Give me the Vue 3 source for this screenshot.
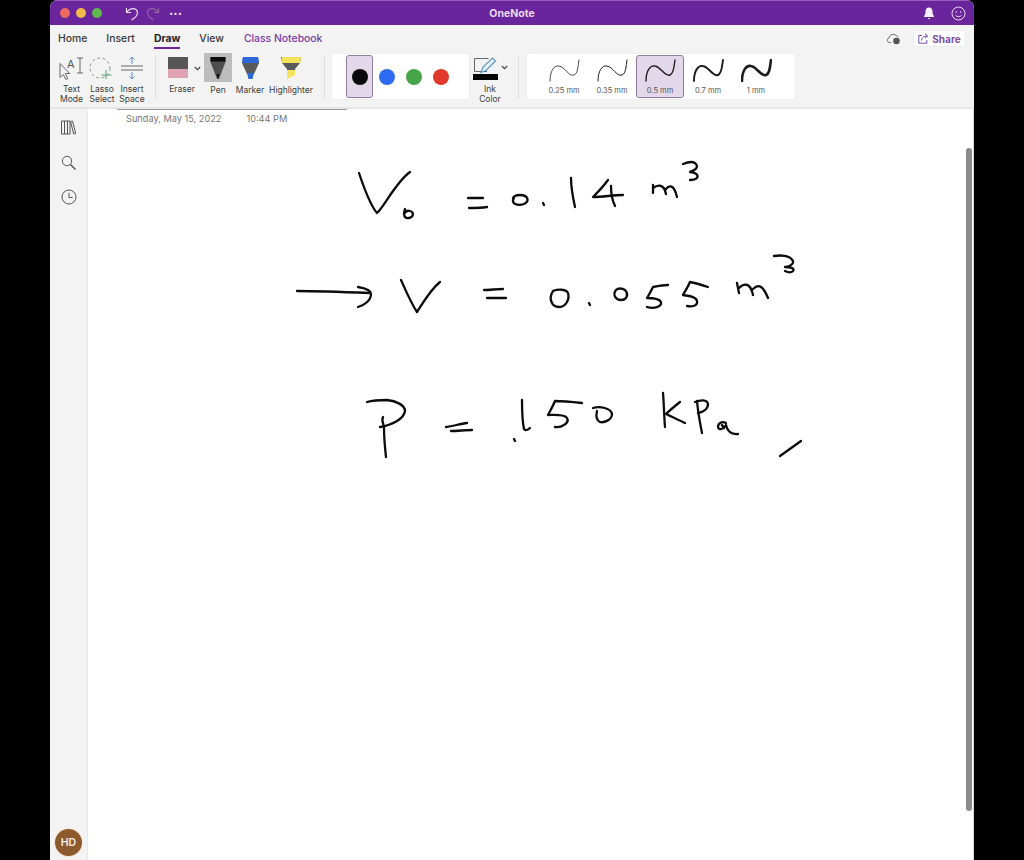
<template>
  <div class="window">
    <header class="titlebar">
      <div class="title-left">
        <span class="light red"></span>
        <span class="light yellow"></span>
        <span class="light green"></span>
        <svg class="undo" width="14" height="15" viewBox="0 0 14 15">
          <path d="M1.5 2v4.5H6M1.5 6.5C4 3 8 1.5 11 3.5c2.5 2 1.5 6-1 8l-3.5 2.500" />
        </svg>
        <svg class="redo" width="14" height="15" viewBox="0 0 14 15">
          <path d="M12.5 2v4.5H8M12.5 6.5C10 3 6 1.5 3 3.5c-2.5 2-1.5 6 1 8l3.5 2.500" />
        </svg>
        <span class="more">···</span>
      </div>
      <div class="app-name">OneNote</div>
      <div class="title-right">
        <svg width="12" height="13" viewBox="0 0 12 13">
          <path d="M6 .5C3.5.5 2.5 2.5 2.5 4.500c0 2.500-.5 3.500-1.500 4.500v1h10V9c-1-1-1.500-2-1.500-4.500C9.500 2.500 8.500.5 6 .5zM4.700 11h2.600L6 12.500z" fill="#f6eefa" />
        </svg>
        <svg width="15" height="15" viewBox="0 0 15 15" class="smile">
          <circle cx="7.5" cy="7.5" r="6.5" />
          <circle cx="5.3" cy="6" r=".8" class="eye" />
          <circle cx="9.7" cy="6" r=".8" class="eye" />
          <path d="M4.5 9.3c1.500 1.800 4.500 1.800 6 0" />
        </svg>
      </div>
    </header>

    <section class="ribbon">
      <div class="tabs">
        <nav class="tab-list">
          <span class="tab">Home</span>
          <span class="tab">Insert</span>
          <span class="tab active">Draw</span>
          <span class="tab">View</span>
          <span class="tab notebook">Class Notebook</span>
        </nav>
        <div class="share-area">
          <svg width="15" height="13" viewBox="0 0 15 13" class="cloud">
            <path d="M5 10.5H3.5C1 10.5.5 6.500 3 6c.3-3 4.500-5 7-2.500 1 .2 2 .8 2.200 2" />
            <circle cx="10.5" cy="9" r="3.3" fill="#555" stroke="none" />
          </svg>
          <button class="share">
            <svg width="11" height="11" viewBox="0 0 11 11">
              <path d="M4 2.5H.8v7.700h8V7M3.500 7.500c.3-3 2.500-4.500 5.500-4.500M7 .8 9.800 3 7 5.300" />
            </svg>
            Share
          </button>
        </div>
      </div>

      <div class="tools">
        <div class="tool mode-tool wide-31">
          <svg width="28" height="24" viewBox="0 0 28 24">
            <path d="M2 7.5v14l3.300-3 2.500 5 2-1-2.500-5h4.500z" class="outline" />
            <text x="9" y="12" class="tool-a">A</text>
            <path d="M19 2h6M22 2v15M19 17h6" class="outline" />
          </svg>
          <span>Text<br />Mode</span>
        </div>
        <div class="tool mode-tool">
          <svg width="28" height="24" viewBox="0 0 28 24">
            <circle cx="12" cy="12" r="10" class="lasso" />
            <path d="M18 14v9M13.5 19h10" class="lasso-plus" />
          </svg>
          <span>Lasso<br />Select</span>
        </div>
        <div class="tool mode-tool">
          <svg width="28" height="24" viewBox="0 0 28 24">
            <path d="M3 10h22M3 14h22" class="outline" />
            <path d="M14 8V1M11.500 3.500 14 1l2.500 2.500M14 16v7M11.500 20.500 14 23l2.500-2.500" class="blue-line" />
          </svg>
          <span>Insert<br />Space</span>
        </div>

        <div class="sep first-sep"></div>

        <div class="tool pen-tool eraser">
          <svg width="20" height="21" viewBox="0 0 20 21">
            <rect width="20" height="12" fill="#565656" />
            <rect y="12" width="20" height="9" fill="#dfa3b2" />
          </svg>
          <span class="one-line">Eraser</span>
          <svg class="chev" width="7" height="5" viewBox="0 0 7 5"><path d="M.8 1 3.500 3.700 6.200 1" /></svg>
        </div>
        <div class="tool pen-tool pen">
          <div class="pen-bg">
            <svg width="16" height="22" viewBox="0 0 16 22">
              <path d="M.5 0h15v5L9 22H7L.5 5z" fill="#4e4e4e" />
              <path d="M.5 0h15v4.500H.5zM6.500 17h3L8 22z" fill="#0b0b0b" />
            </svg>
          </div>
          <span class="one-line">Pen</span>
        </div>
        <div class="tool pen-tool marker">
          <div class="pen-box">
            <svg width="17" height="22" viewBox="0 0 17 22">
              <path d="M1 0h15l1 6-5 11H5L0 6z" fill="#5a5a5a" />
              <path d="M1 0h15l1 6H0zM5 16h7l-1.500 6h-4z" fill="#2d68d8" />
            </svg>
          </div>
          <span class="one-line">Marker</span>
        </div>
        <div class="tool pen-tool highlighter">
          <div class="pen-box">
            <svg width="20" height="22" viewBox="0 0 20 22">
              <path d="M0 0h20l-1 6-5 6v3H6v-3L1 6z" fill="#5a5a5a" />
              <path d="M1 0h19l-1 6H0zM6 13h8v5l-8 4z" fill="#f3e35c" />
            </svg>
          </div>
          <span class="one-line">Highlighter</span>
        </div>

        <div class="sep second-sep"></div>

        <div class="panel colors">
          <div v-for="(color, i) in inkColors" :key="color" class="color-cell" :class="{ selected: i === 0 }">
            <span class="dot" :style="{ background: color }"></span>
          </div>
        </div>

        <div class="tool ink-color">
          <svg width="26" height="24" viewBox="0 0 26 24">
            <path d="M14 14.5H1.500V1.500h14" class="outline" />
            <path d="M8 15.5 10 10 19.500 1l3 3-9.500 9.500z" class="pen-line" />
            <rect y="17" width="25" height="6" fill="#050505" />
          </svg>
          <span>Ink<br />Color</span>
          <svg class="chev" width="7" height="5" viewBox="0 0 7 5"><path d="M.8 1 3.500 3.700 6.200 1" /></svg>
        </div>

        <div class="sep third-sep"></div>

        <div class="panel weights">
          <div v-for="(w, i) in weights" :key="w.label" class="weight-cell" :class="{ selected: i === 2 }">
            <svg width="31" height="23" viewBox="0 0 31 23">
              <path d="M1 22C1 12 5 6 10 7c6 1 10 11 15 9 4-1.500 4-9 5-15" :stroke-width="w.size" />
            </svg>
            <span>{{ w.label }}</span>
          </div>
        </div>
      </div>
    </section>

    <main class="body">
      <aside class="sidebar">
        <div class="side-icons">
          <svg width="15" height="15" viewBox="0 0 15 15">
            <path d="M.5 1h3v13h-3zM3.500 1h3v13h-3zM6.500 1h2.500v13H6.500zM9.500 1.500l2-.5 3.200 12.500-2 .5z" />
          </svg>
          <svg width="15" height="15" viewBox="0 0 15 15">
            <circle cx="6" cy="6" r="4.7" />
            <path d="M9.5 9.5l5 5" stroke-width="1.5" />
          </svg>
          <svg width="16" height="16" viewBox="0 0 16 16">
            <circle cx="8" cy="8" r="7" />
            <path d="M8 3.8V8.500h3.700" />
          </svg>
        </div>
        <div class="avatar">HD</div>
      </aside>

      <div class="page">
        <div class="page-date">
          <span>Sunday, May 15, 2022</span>
          <span class="time">10:44 PM</span>
        </div>
        <!-- рукописные штрихи в координатах окна -->
        <svg class="ink" viewBox="88 109 886 751" width="886" height="751">
          <path v-for="(d, i) in strokes" :key="i" :d="d" />
        </svg>
        <div class="scrollbar"></div>
      </div>
    </main>
  </div>
</template>

<script setup>
const inkColors = ['#0a0a0c', '#2f6bf0', '#46a547', '#e0392b']

const weights = [
  { label: '0.25 mm', size: 0.8 },
  { label: '0.35 mm', size: 1 },
  { label: '0.5 mm', size: 1.4 },
  { label: '0.7 mm', size: 1.9 },
  { label: '1 mm', size: 2.6 },
]

const strokes = [
  // V0 = 0.14 m3
  'M359 173C364 188 371 206 377 213C384 207 396 182 410 172',
  'M405 209C403 214 404 219 409 218C414 217 414 212 410 211C407 210 405 212 404 214',
  'M468 198C473 198 478 198 483 198',
  'M469 208C475 208 481 208 487 207',
  'M514 198C510 204 518 206 524 204C530 201 528 195 520 195C516 195 514 196 513 198',
  'M543 203L544 205',
  'M571 178C571 188 573 198 575 207',
  'M608 180C603 187 598 192 593 197C603 197 613 195 623 195',
  'M611 186C611 193 612 200 615 206',
  'M653 185L653 193M653 188C657 185 664 183 666 194M666 189C669 185 674 184 677 197',
  'M683 164C688 162 695 160 697 166C697 170 692 171 690 172C695 172 699 175 697 178C695 180 692 180 690 180',
  // -> V = 0.055 m3
  'M297 291C320 291 345 292 370 293',
  'M358 287C364 288 371 290 371 294C371 300 365 305 358 307',
  'M401 280C406 291 411 303 417 312C423 303 430 290 440 282',
  'M484 290C490 290 497 289 503 289',
  'M487 298C493 298 500 298 506 298',
  'M553 291C548 299 552 307 559 307C566 307 570 299 568 293C566 289 558 289 553 291',
  'M589 303L590 305',
  'M616 290C612 295 616 300 621 300C627 300 629 294 625 290C622 288 618 288 616 290',
  'M668 285C663 285 658 286 653 287C651 291 649 295 647 298C652 298 659 298 661 302C662 307 654 309 647 307',
  'M708 287C702 285 696 283 690 282C688 287 685 291 683 295C688 296 696 296 697 301C698 306 692 307 687 306',
  'M737 283L739 293M739 288C743 284 750 281 753 295M753 289C757 285 762 283 768 298',
  'M774 256C780 255 790 255 793 261C794 265 788 267 785 267C790 267 795 268 793 271C791 273 787 272 785 271',
  // P = 150 kPa
  'M367 402C374 400 381 400 387 400C396 401 405 405 405 411C404 419 392 425 380 427',
  'M383 417C381 421 384 424 384 428C384 438 385 448 386 457',
  'M446 427C453 426 460 424 467 423',
  'M451 431C458 431 465 430 472 430',
  'M514 439L515 441',
  'M522 400C522 410 522 420 524 429C525 431 528 430 530 428',
  'M582 403C573 402 564 401 555 401C553 406 550 411 548 415C554 415 565 414 567 418C570 423 561 428 555 427',
  'M593 408C600 406 611 408 612 414C612 420 604 423 600 422C596 420 596 415 597 411',
  'M663 393C664 404 664 416 665 427',
  'M680 402C675 406 670 410 666 414C672 417 679 420 685 423',
  'M697 401C698 412 700 423 702 433',
  'M695 402C700 400 707 399 708 404C708 409 703 412 698 413',
  'M726 423C722 421 718 423 718 427C719 431 724 429 726 425C727 429 729 435 738 434M722 425L724 428',
  'M780 456C787 451 794 446 801 441',
]
</script>

<style>
html,
body {
  margin: 0;
  background: #000;
}
</style>

<style scoped>
.window {
  width: 924px;
  height: 860px;
  margin-left: 50px;
  display: flex;
  flex-direction: column;
  overflow: hidden;
  background: #fff;
  font-family: Inter, "Liberation Sans", sans-serif;
  color: #333;
  border-radius: 8px 8px 0 0;
}

.titlebar {
  height: 25px;
  flex-shrink: 0;
  box-sizing: border-box;
  border-top: 1px solid #9a5cc0;
  background: #6a259c;
  display: grid;
  grid-template-columns: 1fr auto 1fr;
  align-items: center;
}

.title-left {
  display: flex;
  align-items: center;
  padding-left: 10px;
}

.light {
  width: 10px;
  height: 10px;
  border-radius: 50%;
  margin-right: 6px;
}

.light.red { background: #ec6a5e; }
.light.yellow { background: #f1b84a; }
.light.green { background: #5fb94f; }

.undo,
.redo {
  fill: none;
  stroke-width: 1.2;
}

.undo {
  margin-left: 17px;
  stroke: #e9daf3;
}

.redo {
  margin-left: 7px;
  stroke: #96649f;
}

.more {
  margin-left: 9px;
  color: #e9daf3;
  font-size: 13px;
  font-weight: 700;
  line-height: 1;
}

.app-name {
  color: #e9d8f3;
  font-size: 10.5px;
  font-weight: 700;
}

.title-right {
  display: flex;
  justify-content: flex-end;
  align-items: center;
  gap: 16px;
  padding-right: 8px;
}

.smile {
  fill: none;
  stroke: #e9daf3;
  stroke-width: 1;
}

.smile .eye {
  fill: #e9daf3;
  stroke: none;
}

.ribbon {
  height: 84px;
  flex-shrink: 0;
  box-sizing: border-box;
  background: #f3f3f3;
  border-bottom: 2px solid #e6e6e6;
}

.tabs {
  height: 27px;
  display: flex;
  justify-content: space-between;
  align-items: center;
}

.tab-list {
  display: flex;
  gap: 19px;
  padding-left: 8px;
  font-size: 10.4px;
  font-weight: 500;
}

.tab {
  position: relative;
  color: #3a3a3a;
}

.tab.active {
  font-weight: 700;
  color: #222;
}

.tab.active::after {
  content: "";
  position: absolute;
  left: 0;
  right: 0;
  bottom: -4px;
  height: 2px;
  background: #6a259c;
}

.tab.notebook {
  margin-left: 1px;
  color: #7a3aa8;
}

.share-area {
  display: flex;
  align-items: center;
  gap: 12px;
  padding-right: 8px;
}

.cloud {
  fill: none;
  stroke: #666;
  stroke-width: 1;
}

.share {
  width: 53px;
  height: 17px;
  padding: 0;
  display: flex;
  align-items: center;
  justify-content: center;
  gap: 3px;
  background: #fff;
  border: 1px solid #ececec;
  border-radius: 3px;
  font-family: inherit;
  font-size: 10px;
  font-weight: 700;
  color: #7d4aa5;
}

.share svg {
  fill: none;
  stroke: #7d4aa5;
  stroke-width: 1;
}

.tools {
  height: 48px;
  padding-left: 6px;
  display: flex;
  align-items: flex-start;
  margin-top: 1px;
}

.tool {
  position: relative;
  display: flex;
  flex-direction: column;
  align-items: center;
  flex-shrink: 0;
  font-size: 8.5px;
  line-height: 9.5px;
  text-align: center;
  color: #3c3c3c;
}

.tool > span {
  display: block;
}

.mode-tool {
  width: 30px;
  padding-top: 3px;
}

.mode-tool.wide-31 {
  width: 31px;
}

.mode-tool > svg {
  margin-bottom: 5px;
}

.outline {
  fill: none;
  stroke: #666;
  stroke-width: 1;
}

.tool-a {
  font-size: 11px;
  fill: #555;
}

.lasso {
  fill: none;
  stroke: #8b9a8d;
  stroke-width: 1;
  stroke-dasharray: 3 2.5;
}

.lasso-plus {
  fill: none;
  stroke: #5d9c84;
  stroke-width: 1;
}

.blue-line {
  fill: none;
  stroke: #5b93c4;
  stroke-width: 1;
}

.pen-line {
  fill: #e9f1f8;
  stroke: #5c97c9;
  stroke-width: 1.2;
}

.sep {
  width: 1px;
  height: 44px;
  margin-top: 2px;
  flex-shrink: 0;
  background: #dedede;
}

.first-sep {
  margin-left: 8px;
  margin-right: 11px;
}

.pen-tool .one-line {
  margin-top: 4px;
}

.eraser {
  width: 30px;
  padding-top: 4px;
  margin-right: 7px;
}

.eraser > svg:first-child {
  align-self: flex-start;
  margin-left: 1px;
}

.eraser .one-line {
  margin-top: 7px;
}

.chev {
  position: absolute;
  fill: none;
  stroke: #444;
  stroke-width: 1.2;
}

.eraser .chev {
  top: 13px;
  left: 27px;
}

.pen {
  width: 28px;
}

.pen-bg {
  width: 28px;
  height: 29px;
  box-sizing: border-box;
  padding-top: 4px;
  display: flex;
  justify-content: center;
  background: #bdbdbd;
}

.pen-box {
  height: 29px;
  box-sizing: border-box;
  padding-top: 4px;
}

.marker {
  width: 28px;
  margin-left: 4px;
}

.highlighter {
  width: 48px;
  margin-left: 3px;
}

.second-sep {
  margin-left: 9px;
  margin-right: 7px;
}

.panel {
  flex-shrink: 0;
  display: flex;
  height: 45px;
  margin-top: 1px;
  background: #fff;
  border-radius: 2px;
  box-shadow: 0 0 1px rgba(0, 0, 0, 0.12);
}

.colors {
  width: 137px;
  box-sizing: border-box;
  padding-left: 14px;
}

.color-cell {
  width: 27px;
  height: 43px;
  margin-top: 1px;
  box-sizing: border-box;
  display: flex;
  align-items: center;
  justify-content: center;
  border: 1px solid transparent;
  border-radius: 3px;
}

.color-cell.selected {
  background: #e2d8ea;
  border-color: #8f7ea0;
}

.dot {
  width: 16px;
  height: 16px;
  border-radius: 50%;
}

.ink-color {
  width: 40px;
  margin-left: 1px;
  padding-top: 4px;
}

.ink-color > svg:first-child {
  margin-bottom: 4px;
  margin-right: 8px;
}

.ink-color .chev {
  top: 12px;
  right: 2px;
}

.third-sep {
  margin-left: 8px;
  margin-right: 8px;
}

.weights {
  width: 268px;
  box-sizing: border-box;
  padding-left: 13px;
}

.weight-cell {
  width: 48px;
  height: 43px;
  margin-top: 1px;
  box-sizing: border-box;
  padding-top: 3px;
  display: flex;
  flex-direction: column;
  align-items: center;
  border: 1px solid transparent;
  border-radius: 3px;
  font-size: 7.5px;
  color: #555;
}

.weight-cell.selected {
  background: #e2d8ea;
  border-color: #8f7ea0;
}

.weight-cell svg {
  fill: none;
  stroke: #1c1c1c;
  stroke-linecap: round;
  margin-bottom: 4px;
}

.body {
  flex: 1;
  min-height: 0;
  display: flex;
}

.sidebar {
  width: 38px;
  flex-shrink: 0;
  box-sizing: border-box;
  padding: 11px 0 4px;
  background: #f3f3f3;
  border-right: 1px solid #e8e8e8;
  display: flex;
  flex-direction: column;
  justify-content: space-between;
  align-items: center;
}

.side-icons {
  display: flex;
  flex-direction: column;
  align-items: center;
  gap: 19.5px;
}

.side-icons svg {
  fill: none;
  stroke: #555;
  stroke-width: 1;
}

.avatar {
  width: 27px;
  height: 27px;
  border-radius: 50%;
  display: flex;
  align-items: center;
  justify-content: center;
  background: #8d5a2e;
  box-shadow: 0 0 0 1px #f4e6d8;
  color: #f5ece4;
  font-size: 10.5px;
  font-weight: 600;
}

.page {
  position: relative;
  flex: 1;
  min-width: 0;
  background: #fff;
  border-right: 1px solid #d8d8d8;
}

.page-date {
  width: 230px;
  margin-left: 29px;
  box-sizing: border-box;
  padding: 3px 0 0 9px;
  border-top: 1px solid #9c9c9c;
  display: flex;
  font-size: 9.2px;
  line-height: 12px;
  color: #777;
}

.page-date .time {
  margin-left: 25px;
}

.ink {
  position: absolute;
  left: 0;
  top: 0;
  fill: none;
  stroke: #0c0c0c;
  stroke-width: 2.3;
  stroke-linecap: round;
  stroke-linejoin: round;
}

.scrollbar {
  position: absolute;
  top: 39px;
  right: 1px;
  width: 6px;
  height: 663px;
  border-radius: 3px;
  background: #8b8b8b;
}
</style>
